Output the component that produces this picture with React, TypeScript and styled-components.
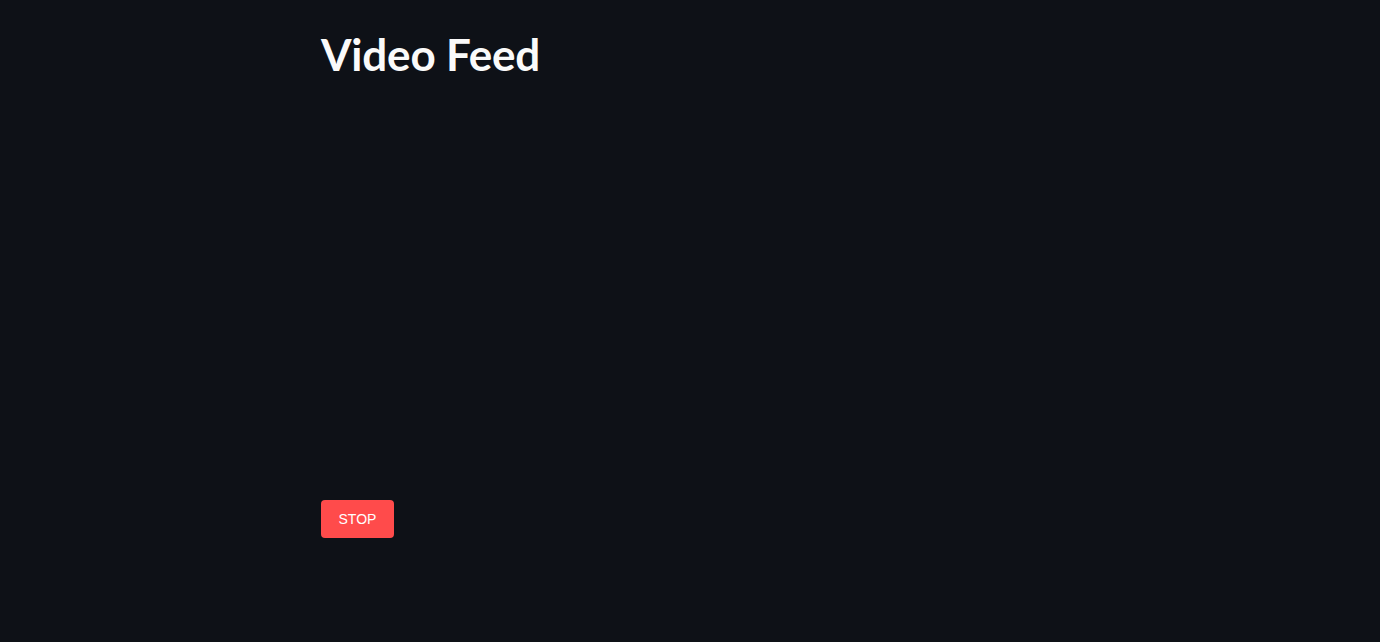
import React from "react";
import styled, { createGlobalStyle } from "styled-components";

const Global = createGlobalStyle`
  html, body { margin: 0; padding: 0; background: #0e1117; }
  body { min-height: 642px; }
`;

const Main = styled.main`
  width: 738px;
  margin: 0 auto;
  padding-top: 24px;
  display: flex;
  flex-direction: column;
  align-items: flex-start;
`;

const Title = styled.h1`
  margin: 0;
  font-family: Lato, "Noto Sans", sans-serif;
  font-weight: 700;
  font-size: 44px;
  line-height: 60px;
  color: #fafafa;
  letter-spacing: -0.2px;
`;

const VideoArea = styled.div`
  width: 100%;
  height: 416px;
`;

const StopButton = styled.button`
  height: 38px;
  padding: 0 17.5px;
  border: none;
  border-radius: 4px;
  background: #ff4b4b;
  color: #ffffff;
  font-family: "Liberation Sans", Arial, sans-serif;
  font-size: 14px;
  cursor: pointer;
`;

export default function App() {
  return (
    <>
      <Global />
      <Main>
        <Title>Video Feed</Title>
        <VideoArea />
        <StopButton>STOP</StopButton>
      </Main>
    </>
  );
}
